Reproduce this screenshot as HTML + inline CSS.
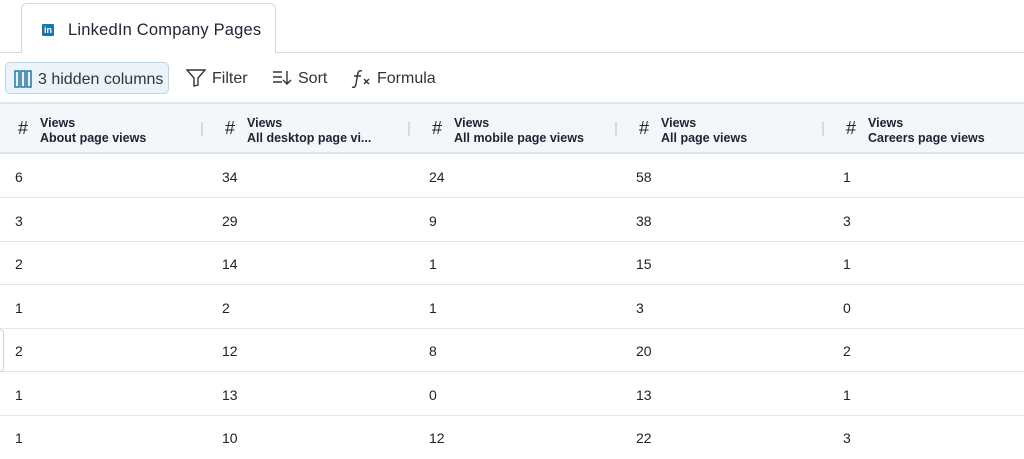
<!DOCTYPE html>
<html><head><style>
*{margin:0;padding:0;box-sizing:border-box}
body{width:1024px;height:454px;overflow:hidden;background:#fff;font-family:"Liberation Sans",sans-serif;color:#1f2233;position:relative}
.tabline{position:absolute;left:0;right:0;top:52px;height:1px;background:#d4d8de}
.tab{position:absolute;left:21px;top:3px;width:255px;height:50px;border:1px solid #d4d8de;border-bottom:none;border-radius:6px 6px 0 0;background:#fff;font-size:16.5px;color:#1f2233}
.tab span{position:absolute;left:46px;top:17px;letter-spacing:0.2px}
.li{position:absolute;left:20px;top:20px;width:12px;height:12px;background:#1a74b0;border-radius:1px;color:#fff;font-size:9px;font-weight:bold;line-height:12px;text-align:center}
.btn{position:absolute;top:62px;height:32px;font-size:16px;color:#333;line-height:33px}
.hid{left:5px;width:164px;border:1px solid #b9d6e6;background:#eaf4fa;border-radius:5px}
.hdr{position:absolute;left:0;right:0;top:102px;height:52px;background:#f4f7f9;border-top:2px solid #e1e4e8;border-bottom:2px solid #dde0e4}
.col{position:absolute;top:0;height:50px}
.hash{position:absolute;top:14px;font-size:18px;color:#222}
.t{position:absolute;top:12px;font-size:12.5px;font-weight:bold;line-height:15px;white-space:nowrap;color:#1f2233}
.sep{position:absolute;top:18px;width:2px;height:14px;background:#d6d9dd}
.row{position:absolute;left:0;right:0;height:44px;border-bottom:1px solid #e3e6ea;font-size:14px;color:#222}
.row div{position:absolute;top:15px}
</style></head><body>
<div class="tabline"></div>
<div class="tab"><div class="li">in</div><span>LinkedIn Company Pages</span></div>
<div class="btn hid">
<svg style="position:absolute;left:8px;top:7px" width="18" height="18" viewBox="0 0 18 18" fill="none" stroke="#1a6d9e" stroke-width="1.4"><rect x="1" y="1" width="4" height="16"/><rect x="7" y="1" width="4" height="16"/><rect x="13" y="1" width="4" height="16"/></svg>
<span style="position:absolute;left:32px">3 hidden columns</span></div>
<div class="btn" style="left:186px"><svg style="position:absolute;left:0;top:7px" width="20" height="18" viewBox="0 0 20 18" fill="none" stroke="#333" stroke-width="1.4"><path d="M1 1h18l-7 8v7l-4 1v-8z"/></svg><span style="position:absolute;left:26px">Filter</span></div>
<div class="btn" style="left:272px"><svg style="position:absolute;left:0;top:8px" width="20" height="16" viewBox="0 0 20 16" fill="none" stroke="#333" stroke-width="1.4"><path d="M1 2h9M1 7h9M1 12h9M15 1v13M11 10l4 4 4-4"/></svg><span style="position:absolute;left:26px">Sort</span></div>
<div class="btn" style="left:350px"><svg style="position:absolute;left:0;top:7px" width="22" height="20" viewBox="0 0 22 20" fill="none" stroke="#333" stroke-width="1.4"><path d="M12 2c-3-1-4 1-4.5 4L6 15c-.5 3-2 4-4 3M4 7h7M14 10l5 5M19 10l-5 5"/></svg><span style="position:absolute;left:27px">Formula</span></div>
<div class="hdr">
<div class="col" style="left:0"><div class="hash" style="left:18px">#</div><div class="t" style="left:40px">Views<br>About page views</div></div>
<div class="sep" style="left:201px"></div>
<div class="col" style="left:0"><div class="hash" style="left:225px">#</div><div class="t" style="left:247px">Views<br>All desktop page vi...</div></div>
<div class="sep" style="left:408px"></div>
<div class="col" style="left:0"><div class="hash" style="left:432px">#</div><div class="t" style="left:454px">Views<br>All mobile page views</div></div>
<div class="sep" style="left:615px"></div>
<div class="col" style="left:0"><div class="hash" style="left:639px">#</div><div class="t" style="left:661px">Views<br>All page views</div></div>
<div class="sep" style="left:822px"></div>
<div class="col" style="left:0"><div class="hash" style="left:846px">#</div><div class="t" style="left:868px">Views<br>Careers page views</div></div>
</div>
<div class="row" style="top:154px"><div style="left:15px">6</div><div style="left:222px">34</div><div style="left:429px">24</div><div style="left:636px">58</div><div style="left:843px">1</div></div>
<div class="row" style="top:198px"><div style="left:15px">3</div><div style="left:222px">29</div><div style="left:429px">9</div><div style="left:636px">38</div><div style="left:843px">3</div></div>
<div class="row" style="top:241px"><div style="left:15px">2</div><div style="left:222px">14</div><div style="left:429px">1</div><div style="left:636px">15</div><div style="left:843px">1</div></div>
<div class="row" style="top:285px"><div style="left:15px">1</div><div style="left:222px">2</div><div style="left:429px">1</div><div style="left:636px">3</div><div style="left:843px">0</div></div>
<div class="row" style="top:328px"><div style="left:15px">2</div><div style="left:222px">12</div><div style="left:429px">8</div><div style="left:636px">20</div><div style="left:843px">2</div></div>
<div style="position:absolute;left:-6px;top:329px;width:10px;height:43px;border:1px solid #cfd3d8;border-radius:4px"></div>
<div class="row" style="top:372px"><div style="left:15px">1</div><div style="left:222px">13</div><div style="left:429px">0</div><div style="left:636px">13</div><div style="left:843px">1</div></div>
<div class="row" style="top:415px;border-bottom:none"><div style="left:15px">1</div><div style="left:222px">10</div><div style="left:429px">12</div><div style="left:636px">22</div><div style="left:843px">3</div></div>
</body></html>
